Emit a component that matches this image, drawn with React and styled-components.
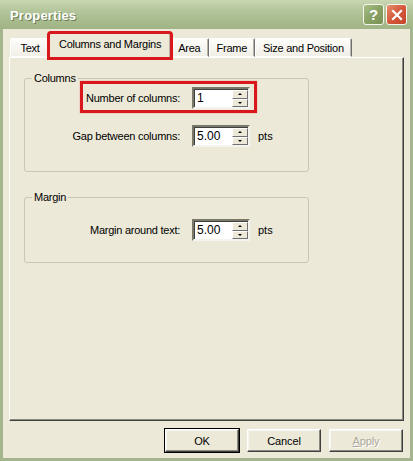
import React from "react";
import styled, { createGlobalStyle, css } from "styled-components";

const GlobalStyle = createGlobalStyle`
  html, body {
    margin: 0;
    padding: 0;
    background: #ffffff;
  }
  body {
    font-family: "Liberation Sans", Arial, sans-serif;
  }
  * {
    box-sizing: border-box;
  }
`;

const tabs = ["Text", "Columns and Margins", "Area", "Frame", "Size and Position"];

const Spin = ({ value }) => (
  <SpinBox>
    <SpinValue>{value}</SpinValue>
    <SpinButtons>
      <SpinButton>
        <Arrow up />
      </SpinButton>
      <SpinButton>
        <Arrow />
      </SpinButton>
    </SpinButtons>
  </SpinBox>
);

const App = () => {
  return (
    <Window>
      <GlobalStyle />
      <TitleBar>
        <Title>Properties</Title>
        <Caps>
          <CapButton kind="help">?</CapButton>
          <CapButton kind="close">
            <svg width="12" height="12" viewBox="0 0 12 12">
              <path
                d="M2 2 L10 10 M10 2 L2 10"
                stroke="#fff"
                strokeWidth="2.2"
                strokeLinecap="square"
              />
            </svg>
          </CapButton>
        </Caps>
      </TitleBar>
      <Body>
        <TabStrip>
          {tabs.map((t, i) => (
            <Tab key={i} active={i === 1}>
              {t}
            </Tab>
          ))}
        </TabStrip>
        <Panel>
          <Group h={94}>
            <Legend>Columns</Legend>
            <Highlight>
              <Label w={97}>Number of columns:</Label>
              <Spin value="1" />
            </Highlight>
            <Row top={12}>
              <Label w={155}>Gap between columns:</Label>
              <Spin value="5.00" />
              <Unit>pts</Unit>
            </Row>
          </Group>
          <Group h={66} gap={25}>
            <Legend>Margin</Legend>
            <Row top={19}>
              <Label w={155}>Margin around text:</Label>
              <Spin value="5.00" />
              <Unit>pts</Unit>
            </Row>
          </Group>
        </Panel>
        <Footer>
          <Button def>OK</Button>
          <Button>Cancel</Button>
          <Button disabled>
            <u>A</u>pply
          </Button>
        </Footer>
      </Body>
    </Window>
  );
};

export default App;

const Window = styled.div`
  width: 413px;
  height: 461px;
  display: flex;
  flex-direction: column;
  background: #a3b68d;
  padding: 0 3px 3px 3px;
`;
const TitleBar = styled.div`
  height: 29px;
  margin: 0 -3px;
  display: flex;
  align-items: center;
  justify-content: space-between;
  padding: 2px 6px 0 10px;
  background: linear-gradient(180deg, #c9d6b3 0%, #b5c69c 35%, #a8bb8d 70%, #a1b487 100%);
`;
const Title = styled.span`
  color: #ffffff;
  font-weight: bold;
  font-size: 13px;
  letter-spacing: 0.2px;
  text-shadow: 1px 1px 0 #6d7d56;
`;
const Caps = styled.div`
  display: flex;
  gap: 2px;
  margin-bottom: 2px;
`;
const CapButton = styled.div`
  width: 21px;
  height: 21px;
  border: 1px solid #f4f6ee;
  border-radius: 3px;
  display: flex;
  align-items: center;
  justify-content: center;
  color: #ffffff;
  font-weight: bold;
  font-size: 15px;
  ${(p) =>
    p.kind === "close"
      ? css`
          background: linear-gradient(135deg, #e88e6e 0%, #d4573a 50%, #c2432a 100%);
        `
      : css`
          background: linear-gradient(135deg, #a9be86 0%, #8aa264 50%, #7a9256 100%);
        `}
`;
const Body = styled.div`
  flex: 1;
  display: flex;
  flex-direction: column;
  background: #ece9d8;
  padding: 4px 6px 6px 6px;
`;
const TabStrip = styled.div`
  height: 24px;
  display: flex;
  align-items: flex-end;
  padding-left: 1px;
`;
const Tab = styled.div`
  height: 19px;
  min-width: 38px;
  padding: 0 7px;
  display: flex;
  align-items: center;
  justify-content: center;
  font-size: 11px;
  letter-spacing: -0.25px;
  color: #000;
  background: linear-gradient(180deg, #fdfdfb 0%, #f1efe6 100%);
  border: 1px solid;
  border-color: #ffffff #6f6f6f transparent #ffffff;
  box-shadow: inset -1px 0 0 #b8b5a6;
  border-radius: 2px 2px 0 0;
  &:first-child {
    min-width: 40px;
  }
  ${(p) =>
    p.active &&
    css`
      position: relative;
      z-index: 1;
      height: 25px;
      margin: 0 -1px -1px -1px;
      padding: 0 9px 4px 9px;
      background: #ece9d8;
      border-bottom: none;
      outline: 3px solid #d8181c;
      outline-offset: -1px;
    `}
`;
const Panel = styled.div`
  flex: 1;
  display: flex;
  flex-direction: column;
  background: #ece9d8;
  border: 1px solid;
  border-color: #ffffff #404040 #404040 #ffffff;
  box-shadow: inset -1px -1px 0 #8a8a80;
  padding: 20px 14px;
`;
const Group = styled.div`
  position: relative;
  width: 285px;
  height: ${(p) => p.h}px;
  margin-top: ${(p) => p.gap || 0}px;
  border: 1px solid #c8c6b8;
  border-radius: 3px;
  padding-top: 2px;
`;
const Legend = styled.span`
  position: absolute;
  top: -8px;
  left: 7px;
  padding: 0 2px;
  background: #ece9d8;
  font-size: 11px;
  line-height: 14px;
  letter-spacing: -0.25px;
  color: #000;
`;
const Highlight = styled.div`
  display: inline-flex;
  align-items: center;
  margin-left: 55px;
  border: 3px solid #d8181c;
  box-shadow: 0 0 1px rgba(216, 24, 28, 0.6);
  padding: 3px 4px 1px 0;
`;
const Row = styled.div`
  display: flex;
  align-items: center;
  margin-top: ${(p) => p.top}px;
`;
const Label = styled.span`
  width: ${(p) => p.w}px;
  text-align: right;
  margin-right: 12px;
  font-size: 11px;
  letter-spacing: -0.25px;
  color: #000;
  white-space: nowrap;
`;
const Unit = styled.span`
  margin-left: 8px;
  font-size: 11px;
  color: #000;
`;
const SpinBox = styled.div`
  width: 58px;
  height: 22px;
  display: flex;
  align-items: stretch;
  background: #ffffff;
  border: 2px solid;
  border-color: #7a7868 #f4f3ee #f4f3ee #7a7868;
  box-shadow: inset 1px 1px 0 #404040;
`;
const SpinValue = styled.span`
  flex: 1;
  padding: 1px 0 0 3px;
  font-size: 12px;
  line-height: 16px;
  color: #000;
`;
const SpinButtons = styled.div`
  width: 16px;
  display: flex;
  flex-direction: column;
  padding: 1px 0 0 0;
`;
const SpinButton = styled.div`
  flex: 1;
  display: flex;
  align-items: center;
  justify-content: center;
  background: #ece9d8;
  border: 1px solid;
  border-color: #ffffff #6f6f6f #6f6f6f #ffffff;
`;
const Arrow = styled.span`
  width: 0;
  height: 0;
  border-left: 2px solid transparent;
  border-right: 2px solid transparent;
  ${(p) =>
    p.up
      ? css`
          border-bottom: 2px solid #000;
        `
      : css`
          border-top: 2px solid #000;
        `}
`;
const Footer = styled.div`
  display: flex;
  justify-content: flex-end;
  gap: 8px;
  margin-top: 8px;
  padding-right: 1px;
`;
const Button = styled.div`
  width: 74px;
  height: 23px;
  display: flex;
  align-items: center;
  justify-content: center;
  font-size: 11px;
  letter-spacing: -0.1px;
  background: #ece9d8;
  color: ${(p) => (p.disabled ? "#aca899" : "#000")};
  text-shadow: ${(p) => (p.disabled ? "1px 1px 0 #ffffff" : "none")};
  border: 1px solid;
  border-color: #ffffff #404040 #404040 #ffffff;
  box-shadow: inset -1px -1px 0 #8a8a80, inset 1px 1px 0 #f6f5ef;
  ${(p) =>
    p.def &&
    css`
      outline: 1px solid #000;
      outline-offset: 0;
    `}
`;
